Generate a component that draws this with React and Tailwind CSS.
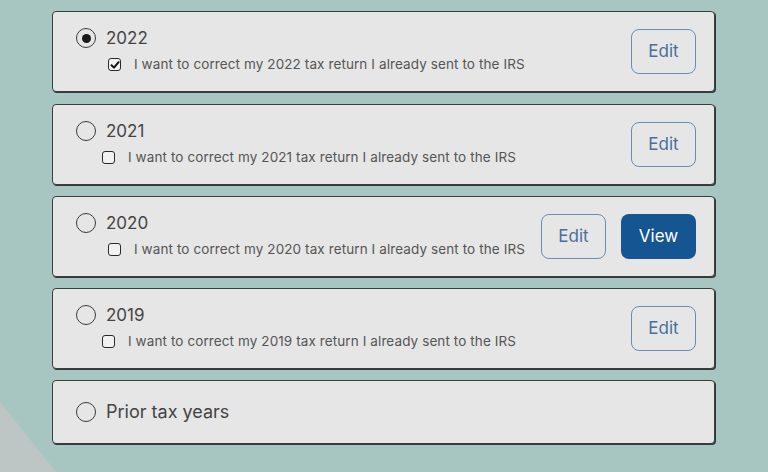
const years = [
  { year: "2022", selected: true, checked: true, indent: "ml-[32px]", view: false },
  { year: "2021", selected: false, checked: false, indent: "ml-[26px]", view: false },
  { year: "2020", selected: false, checked: false, indent: "ml-[32px]", view: true },
  { year: "2019", selected: false, checked: false, indent: "ml-[26px]", view: false },
];

const Radio = ({ selected }) => (
  <span className="w-[20px] h-[20px] rounded-full border-[1.5px] border-[#3a3a3a] flex items-center justify-center shrink-0">
    {selected && <span className="w-[9px] h-[9px] rounded-full bg-[#1a1a1a]" />}
  </span>
);

const Checkbox = ({ checked }) => (
  <span className="w-[13px] h-[13px] rounded-[3px] border-[1.5px] border-[#2a2a2a] flex items-center justify-center shrink-0 bg-[#f2f2f2]">
    {checked && (
      <svg width="10" height="10" viewBox="0 0 10 10">
        <path d="M1.5 5.2 L4 7.6 L8.6 2.2" fill="none" stroke="#111" strokeWidth="2" strokeLinecap="round" strokeLinejoin="round" />
      </svg>
    )}
  </span>
);

const YearCard = ({ item, first }) => (
  <div className={`h-[81px] bg-[#e6e6e6] border border-[#3c3c3c] rounded-[4px] pl-[23px] pr-[18px] flex items-center justify-between shadow-[1px_1px_0_#2e3b3a] ${first ? "mb-[1px]" : ""}`}>
    <div className="flex flex-col self-start pt-[16px]">
      <div className="flex items-center gap-[10px]">
        <Radio selected={item.selected} />
        <span className="text-[17px] text-[#444] leading-none">{item.year}</span>
      </div>
      <div className={`flex items-center gap-[13px] mt-[10px] ${item.indent}`}>
        <Checkbox checked={item.checked} />
        <span className="text-[13.5px] tracking-[0.1px] text-[#555] leading-none">
          I want to correct my {item.year} tax return I already sent to the IRS
        </span>
      </div>
    </div>
    <div className="flex items-center gap-[15px]">
      <button className="w-[65px] h-[45px] rounded-[8px] border border-[#6a8eb3] text-[#46709b] text-[17px]">Edit</button>
      {item.view && (
        <button className="w-[75px] h-[45px] rounded-[8px] bg-[#155592] text-white text-[17px]">View</button>
      )}
    </div>
  </div>
);

export default function App() {
  return (
    <div
      className="w-[768px] h-[472px] overflow-hidden relative bg-[#a8c6c1]"
      style={{ fontFamily: '"Inter", "Noto Sans", sans-serif' }}
    >
      <div className="absolute left-0 bottom-0 w-0 h-0 border-l-[56px] border-l-[#bdc6c5] border-t-[70px] border-t-transparent" />
      <div className="relative ml-[52px] pt-[11px] w-[663px] flex flex-col gap-[11px]">
        {years.map((item, i) => (
          <YearCard key={item.year} item={item} first={i === 0} />
        ))}
        <div className="h-[64px] bg-[#e6e6e6] border border-[#3c3c3c] rounded-[4px] pl-[23px] flex items-center gap-[10px] shadow-[1px_1px_0_#2e3b3a]">
          <Radio selected={false} />
          <span className="text-[18px] text-[#444] leading-none">Prior tax years</span>
        </div>
      </div>
    </div>
  );
}
